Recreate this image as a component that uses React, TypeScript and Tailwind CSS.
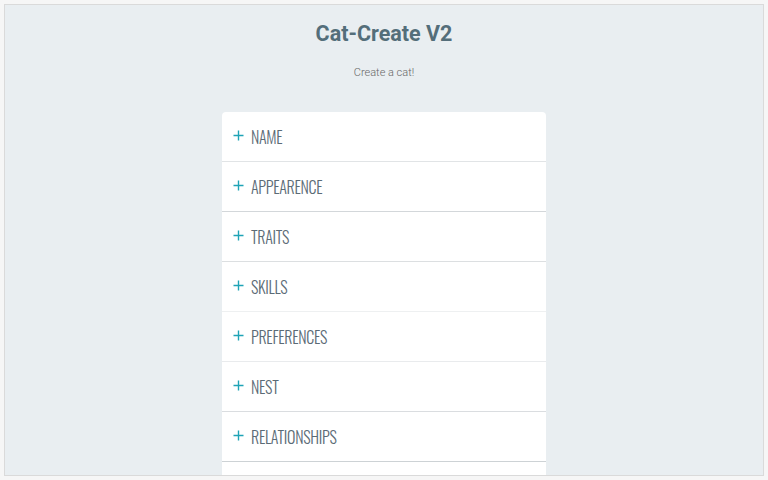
const sections = [
  { name: "NAME", line: "border-[#e1e4e6]" },
  { name: "APPEARENCE", line: "border-[#d3d7da]" },
  { name: "TRAITS", line: "border-[#dcdfe1]" },
  { name: "SKILLS", line: "border-[#eef0f1]" },
  { name: "PREFERENCES", line: "border-[#e9ebed]" },
  { name: "NEST", line: "border-[#dadde0]" },
  { name: "RELATIONSHIPS", line: "border-[#cdd2d5]" },
  { name: "", line: "border-transparent" },
];

export default function App() {
  return (
    <main className="h-[480px] overflow-hidden bg-[#f6f6f6] p-1 font-['Roboto',sans-serif]">
      <section className="h-[472px] overflow-hidden border border-[#dadada] bg-[#e9eef1]">
        <h1 className="mt-[15px] text-center text-[21.5px] font-bold leading-[28px] text-[#546e7a]">
          Cat-Create V2
        </h1>
        <p className="mt-[18px] text-center text-[11px] font-light leading-[14px] text-[#666]">
          Create a cat!
        </p>

        <div className="mx-auto mt-[32px] w-[324px] rounded-t-[4px] bg-white">
          {sections.map((s, i) => (
            <div
              key={i}
              className={"flex h-[50px] items-center gap-[7px] border-b pl-[11px] " + s.line}
            >
              {s.name && (
                <>
                  <svg width="11" height="11" viewBox="0 0 11 11" className="mb-[2px]">
                    <path d="M5.5 0.5v10M0.5 5.5h10" stroke="#1fa3b6" strokeWidth="1.4" />
                  </svg>
                  <span className="font-['Oswald','Roboto_Condensed',sans-serif] text-[16px] font-light tracking-[-0.3px] text-[#5b6b76]">
                    {s.name}
                  </span>
                </>
              )}
            </div>
          ))}
        </div>
      </section>
    </main>
  );
}
